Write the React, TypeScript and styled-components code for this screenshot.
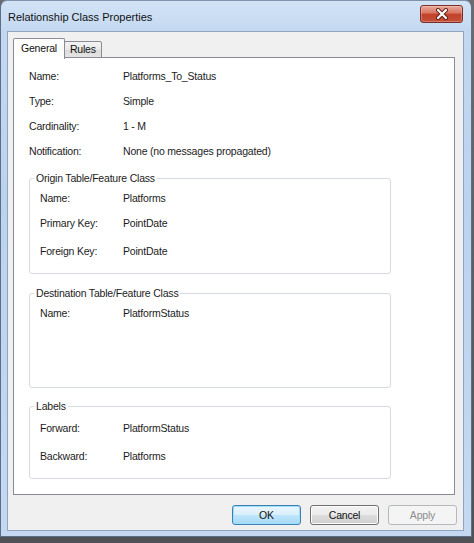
import React from "react";
import styled, { createGlobalStyle } from "styled-components";

const GlobalStyle = createGlobalStyle`
  html, body {
    margin: 0;
    padding: 0;
    background: #5b5d60;
  }
  body {
    font-family: "Liberation Sans", Arial, sans-serif;
    font-size: 10.5px;
    letter-spacing: -0.2px;
    color: #1c1c1c;
  }
`;

const Screen = styled.div`
  width: 474px;
  height: 543px;
  overflow: hidden;
  background: linear-gradient(to bottom, #6a6c70, #4f5154);
`;

const Window = styled.div`
  width: 472px;
  height: 537px;
  box-sizing: border-box;
  padding: 0 7px 5px 6px;
  border-radius: 7px 7px 0 0;
  border: 1px solid #5c6f86;
  border-top-color: #7f93ab;
  background: linear-gradient(to bottom, #d2e3f6 0px, #c3d8f0 30px, #bcd3ee 200px, #c4d9f1 537px);
  display: flex;
  flex-direction: column;
`;

const TitleBar = styled.div`
  height: 30px;
  display: flex;
  align-items: flex-start;
  justify-content: space-between;
`;

const Title = styled.span`
  margin: 10px 0 0 1px;
  font-size: 11px;
  letter-spacing: 0;
  color: #111;
`;

const CloseButton = styled.div`
  width: 43px;
  height: 18px;
  margin: 4px 1px 0 0;
  box-sizing: border-box;
  border: 1px solid #7b2f24;
  border-radius: 3px;
  background: linear-gradient(to bottom, #e9a99a 0%, #d8735f 45%, #c2412b 50%, #c4503b 100%);
  display: flex;
  align-items: center;
  justify-content: center;
  box-shadow: inset 0 0 0 1px rgba(255, 255, 255, 0.25);
`;

const Client = styled.div`
  flex: 1;
  box-sizing: border-box;
  border: 1px solid #8ea4bf;
  background: #f0f0f0;
  padding: 6px 8px 0 5px;
  display: flex;
  flex-direction: column;
`;

const TabStrip = styled.div`
  height: 20px;
  display: flex;
  align-items: flex-end;
  position: relative;
  z-index: 1;
  margin-bottom: -1px;
`;

const Tab = styled.div<{ $active?: boolean }>`
  box-sizing: border-box;
  border: 1px solid #898c95;
  border-bottom: ${(p) => (p.$active ? "none" : "1px solid #898c95")};
  border-radius: 2px 2px 0 0;
  height: ${(p) => (p.$active ? "21px" : "17px")};
  margin-bottom: ${(p) => (p.$active ? "-1px" : "0")};
  margin-left: ${(p) => (p.$active ? "0" : "-1px")};
  padding: ${(p) => (p.$active ? "3px 7px 0 7px" : "1px 5px 0 5px")};
  background: ${(p) =>
    p.$active ? "#ffffff" : "linear-gradient(to bottom, #f3f3f3, #e9e9e9 50%, #d9d9d9 51%, #e4e4e4)"};
  color: #111;
`;

const Panel = styled.div`
  height: 438px;
  box-sizing: border-box;
  border: 1px solid #898c95;
  background: #ffffff;
  padding: 5px 0 0 15px;
`;

const Row = styled.div<{ $h: number; $indent?: number }>`
  height: ${(p) => p.$h}px;
  display: flex;
  align-items: center;
  padding-left: ${(p) => p.$indent ?? 0}px;
`;

const Label = styled.span<{ $w: number }>`
  width: ${(p) => p.$w}px;
  flex-shrink: 0;
`;

const Value = styled.span``;

const Group = styled.fieldset<{ $mt: number; $pt?: number; $pb: number }>`
  width: 362px;
  box-sizing: border-box;
  margin: ${(p) => p.$mt}px 0 0 0;
  padding: ${(p) => p.$pt ?? 0}px 0 ${(p) => p.$pb}px 0;
  border: 1px solid #d5dbe0;
  border-radius: 3px;
  min-width: 0;
`;

const Legend = styled.legend`
  margin-left: 4px;
  padding: 0 2px;
  line-height: 14px;
  color: #1c1c1c;
`;

const ButtonRow = styled.div`
  display: flex;
  justify-content: flex-end;
  gap: 9px;
  margin: 10px -2px 0 0;
`;

const Button = styled.div<{ $default?: boolean; $disabled?: boolean }>`
  width: 69px;
  height: 20px;
  box-sizing: border-box;
  border-radius: 3px;
  border: 1px solid ${(p) => (p.$default ? "#3c7fb1" : p.$disabled ? "#b5b9bc" : "#707070")};
  background: ${(p) =>
    p.$disabled
      ? "#f4f4f4"
      : p.$default
      ? "linear-gradient(to bottom, #eaf6fd, #d9f0fc 50%, #bee6fd 51%, #a7d9f5)"
      : "linear-gradient(to bottom, #f2f2f2, #ebebeb 50%, #dddddd 51%, #cfcfcf)"};
  box-shadow: ${(p) => (p.$default ? "inset 0 0 0 1px #9fe0ff" : p.$disabled ? "none" : "inset 0 0 0 1px #fcfcfc")};
  color: ${(p) => (p.$disabled ? "#8d8d8d" : "#111")};
  display: flex;
  align-items: center;
  justify-content: center;
`;

const CloseIcon = () => (
  <svg width="14" height="12" viewBox="0 0 14 12">
    <path d="M3 2 L11 10 M11 2 L3 10" stroke="#5a1d14" strokeWidth="4" strokeLinecap="round" />
    <path d="M3 2 L11 10 M11 2 L3 10" stroke="#ffffff" strokeWidth="2.2" strokeLinecap="round" />
  </svg>
);

const generalRows = [
  ["Name:", "Platforms_To_Status"],
  ["Type:", "Simple"],
  ["Cardinality:", "1 - M"],
  ["Notification:", "None (no messages propagated)"],
];

export default function App() {
  return (
    <>
      <GlobalStyle />
      <Screen>
        <Window>
          <TitleBar>
            <Title>Relationship Class Properties</Title>
            <CloseButton>
              <CloseIcon />
            </CloseButton>
          </TitleBar>
          <Client>
            <TabStrip>
              <Tab $active>General</Tab>
              <Tab>Rules</Tab>
            </TabStrip>
            <Panel>
              {generalRows.map(([l, v]) => (
                <Row $h={25} key={l}>
                  <Label $w={94}>{l}</Label>
                  <Value>{v}</Value>
                </Row>
              ))}

              <Group $mt={8} $pb={6}>
                <Legend>Origin Table/Feature Class</Legend>
                <Row $h={26} $indent={10}>
                  <Label $w={83}>Name:</Label>
                  <Value>Platforms</Value>
                </Row>
                <Row $h={24} $indent={10}>
                  <Label $w={83}>Primary Key:</Label>
                  <Value>PointDate</Value>
                </Row>
                <Row $h={32} $indent={10}>
                  <Label $w={83}>Foreign Key:</Label>
                  <Value>PointDate</Value>
                </Row>
              </Group>

              <Group $mt={12} $pb={62}>
                <Legend>Destination Table/Feature Class</Legend>
                <Row $h={25} $indent={10}>
                  <Label $w={83}>Name:</Label>
                  <Value>PlatformStatus</Value>
                </Row>
              </Group>

              <Group $mt={11} $pt={1} $pb={8}>
                <Legend>Labels</Legend>
                <Row $h={28} $indent={10}>
                  <Label $w={83}>Forward:</Label>
                  <Value>PlatformStatus</Value>
                </Row>
                <Row $h={28} $indent={10}>
                  <Label $w={83}>Backward:</Label>
                  <Value>Platforms</Value>
                </Row>
              </Group>
            </Panel>
            <ButtonRow>
              <Button $default>OK</Button>
              <Button>Cancel</Button>
              <Button $disabled>Apply</Button>
            </ButtonRow>
          </Client>
        </Window>
      </Screen>
    </>
  );
}
